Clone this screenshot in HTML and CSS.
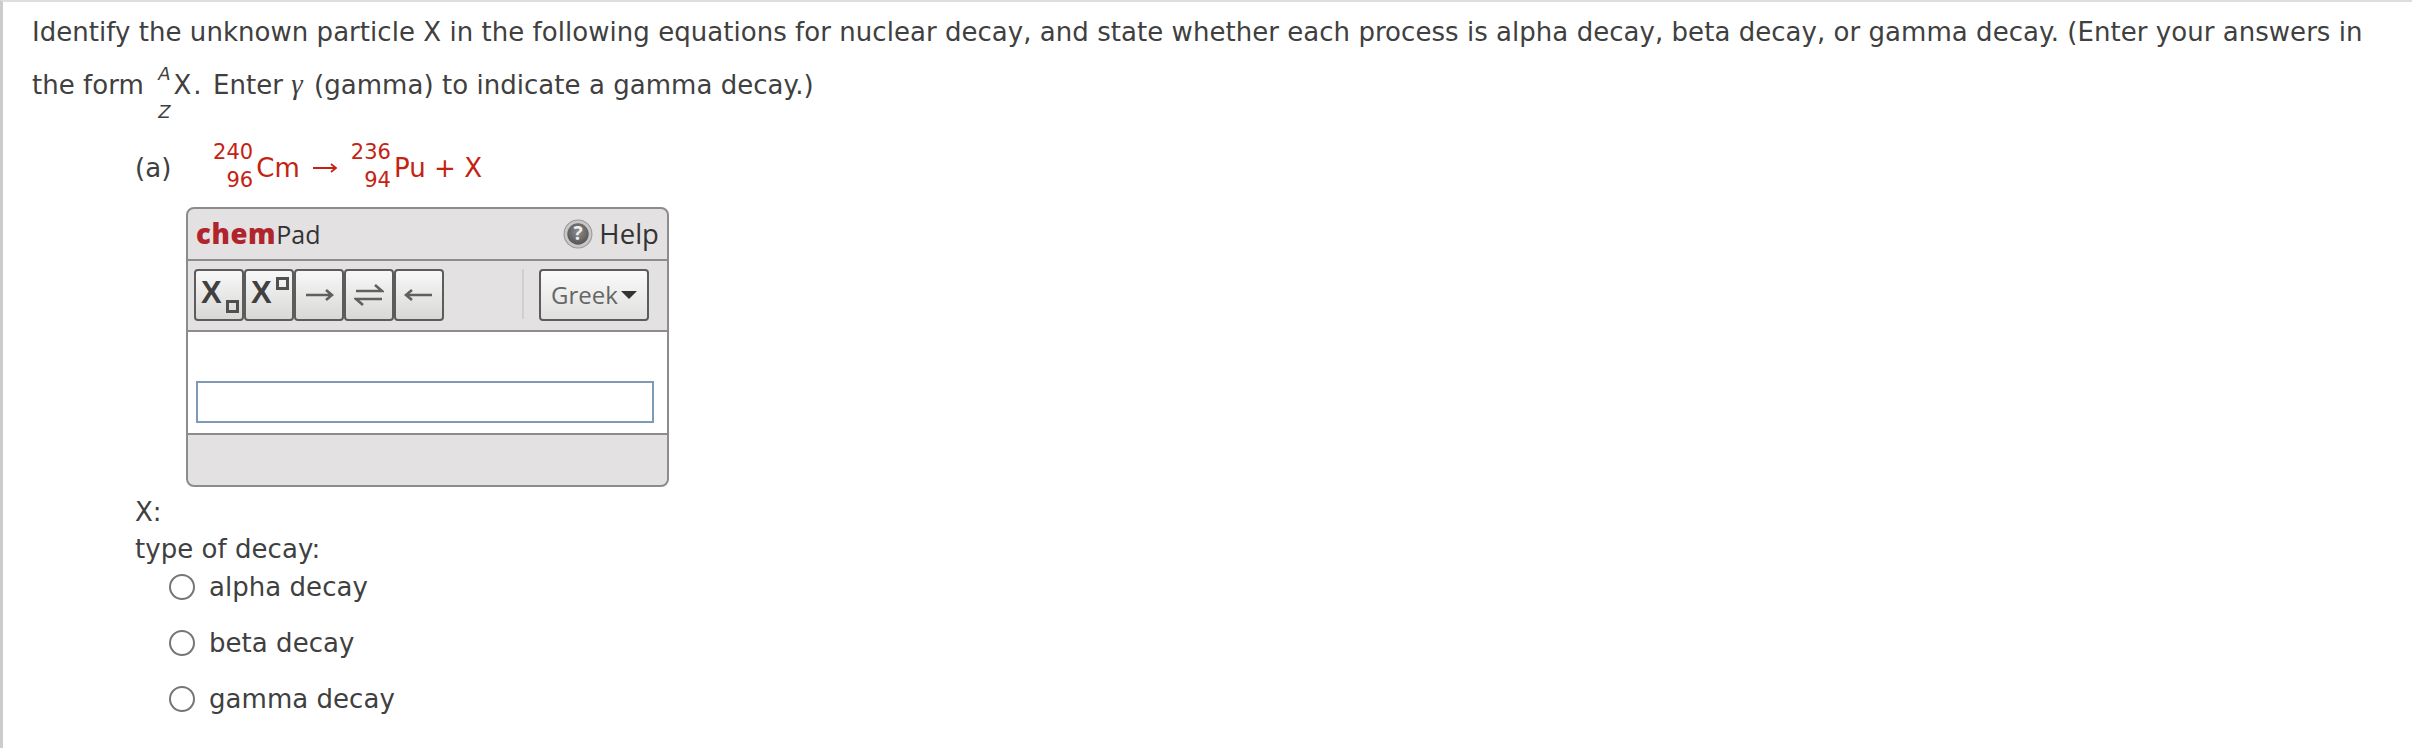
FILE: index.html
```html
<!DOCTYPE html>
<html lang="en">
<head>
    <meta charset="UTF-8">
    <title>Nuclear decay question</title>
    <link rel="stylesheet" href="styles.css">
</head>
<body>
    <div class="question">
        <p class="prompt">Identify the unknown particle X in the following equations for nuclear decay, and state whether each process is alpha decay, beta decay, or gamma decay. (Enter your answers in the form <span class="iso form"><i>A</i><i>Z</i></span><span class="form-x">X.</span> Enter <span class="gamma">&gamma;</span> (gamma) to indicate a gamma decay.)</p>

        <div class="part">
            <div class="equation">
                <span class="part-label">(a)</span>
                <div class="formula">
                    <span class="iso"><span>240</span><span>96</span></span>
                    <span>Cm</span>
                    <svg class="react-arrow" width="26" height="14" viewBox="0 0 26 14"><path d="M1 7H24M19 3l5 4-5 4" fill="none" stroke="#c42212" stroke-width="1.8"/></svg>
                    <span class="iso"><span>236</span><span>94</span></span>
                    <span class="pre">Pu + X</span>
                </div>
            </div>

            <!-- chemPad widget -->
            <div class="chempad">
                <div class="pad-header">
                    <span class="pad-title"><b>chem</b>Pad</span>
                    <span class="pad-help">
                        <svg width="30" height="30" viewBox="0 0 28 28">
                            <defs>
                                <radialGradient id="helpFill" cx="50%" cy="40%" r="60%">
                                    <stop offset="0" stop-color="#8d8d8d"/>
                                    <stop offset="1" stop-color="#555"/>
                                </radialGradient>
                            </defs>
                            <circle cx="14" cy="14" r="13" fill="#c8c8c8" stroke="#999"/>
                            <circle cx="14" cy="14" r="10" fill="url(#helpFill)"/>
                            <text x="14" y="20" text-anchor="middle" class="help-mark">?</text>
                        </svg>
                        Help
                    </span>
                </div>
                <div class="pad-toolbar">
                    <div class="tool-group">
                        <button class="tool tool-x">X<span class="box box-sub"></span></button>
                        <button class="tool tool-x">X<span class="box box-sup"></span></button>
                        <button class="tool">
                            <svg width="30" height="16" viewBox="0 0 30 16"><path d="M2 8H28M22 3l6 5-6 5" fill="none" stroke="#606060" stroke-width="2.6"/></svg>
                        </button>
                        <button class="tool">
                            <svg width="30" height="24" viewBox="0 0 30 24"><path d="M2 8H28L21 2M28 16H2L9 22" fill="none" stroke="#606060" stroke-width="2.6"/></svg>
                        </button>
                        <button class="tool">
                            <svg width="30" height="16" viewBox="0 0 30 16"><path d="M28 8H2M8 3L2 8l6 5" fill="none" stroke="#606060" stroke-width="2.6"/></svg>
                        </button>
                    </div>
                    <div class="tool-sep"></div>
                    <button class="greek">Greek<span class="caret"></span></button>
                </div>
                <div class="pad-body">
                    <input class="pad-input" type="text">
                </div>
                <div class="pad-footer"></div>
            </div>

            <div class="answer-label first">X:</div>
            <div class="answer-label">type of decay:</div>
            <div class="choices">
                <label class="choice"><input type="radio" name="a"> alpha decay</label>
                <label class="choice"><input type="radio" name="a"> beta decay</label>
                <label class="choice"><input type="radio" name="a"> gamma decay</label>
            </div>
        </div>
    </div>
</body>
</html>
```

FILE: styles.css
```css
html, body {
    margin: 0;
    padding: 0;
    height: 100%;
    overflow: hidden;
    background: #fff;
}
body {
    box-sizing: border-box;
    border-top: 2px solid #ddd;
    border-left: 3px solid #ccc;
    color: #404040;
    font-family: "DejaVu Sans", Verdana, sans-serif;
    font-size: 26px;
    letter-spacing: 0.04px;
}
.question {
    padding: 4px 30px 0 29px;
}
.prompt {
    margin: 0;
    line-height: 52px;
}
.iso {
    display: inline-flex;
    flex-direction: column;
    align-items: flex-end;
    font-size: 21px;
    line-height: 28px;
    margin: -4px 3px 0 0;
}
.iso.form {
    font-size: 18px;
    line-height: 38px;
    vertical-align: middle;
    margin: -12px 3px -12px 6px;
    position: relative;
    top: 6px;
}
.form-x {
    letter-spacing: 2px;
    margin-right: 1px;
}
.gamma {
    font-family: "Liberation Serif", serif;
    font-size: 29px;
    font-style: italic;
    margin-right: 3px;
}
.part {
    padding: 27px 0 0 103px;
}
.equation {
    display: flex;
    align-items: center;
    height: 56px;
}
.part-label {
    width: 78px;
}
.formula {
    color: #c42212;
    display: flex;
    align-items: center;
}
.pre {
    white-space: pre;
}
.react-arrow {
    margin: 0 13px 0 12px;
}
.chempad {
    box-sizing: border-box;
    width: 483px;
    height: 280px;
    margin: 11px 0 0 51px;
    border: 2px solid #8c8c8c;
    border-radius: 8px;
    background: #e4e1e2;
    display: flex;
    flex-direction: column;
}
.pad-header {
    height: 50px;
    box-sizing: content-box;
    border-bottom: 2px solid #8c8c8c;
    display: flex;
    align-items: center;
    justify-content: space-between;
    padding: 0 8px;
    font-family: "Open Sans", sans-serif;
    font-size: 27.5px;
    color: #333;
}
.pad-title {
    font-size: 25px;
}
.pad-title b {
    color: #b0242c;
    font-size: 27.5px;
    font-weight: 800;
    letter-spacing: 0.6px;
}
.pad-help {
    display: flex;
    align-items: center;
    gap: 6px;
}
.help-mark {
    fill: #eee;
    font-family: "Open Sans", sans-serif;
    font-size: 18px;
    font-weight: 700;
}
.pad-toolbar {
    box-sizing: border-box;
    height: 71px;
    border-bottom: 2px solid #8c8c8c;
    display: flex;
    align-items: flex-start;
    padding: 8px 18px 0 6px;
}
.tool-group {
    display: flex;
    flex: 1;
}
.tool {
    box-sizing: border-box;
    width: 50px;
    height: 52px;
    padding: 0;
    border: 2px solid #5c5c5c;
    border-radius: 4px;
    background: linear-gradient(#f8f8f8, #d8d8d6);
    display: flex;
    align-items: center;
    justify-content: center;
}
.tool-x {
    position: relative;
    justify-content: flex-start;
    padding: 0 0 4px 5px;
    font-family: "Liberation Sans", sans-serif;
    font-size: 31px;
    font-weight: 700;
    color: #404040;
}
.box {
    position: absolute;
    width: 7px;
    height: 7px;
    border: 3px solid #505050;
    box-sizing: content-box;
}
.box-sub {
    right: 3px;
    bottom: 6px;
}
.box-sup {
    right: 3px;
    top: 6px;
}
.tool-sep {
    width: 2px;
    height: 50px;
    background: #d0d0d0;
    margin-right: 15px;
}
.greek {
    box-sizing: border-box;
    width: 110px;
    height: 52px;
    padding: 0;
    border: 2px solid #5c5c5c;
    border-radius: 4px;
    background: linear-gradient(#fafafa, #e0e0de);
    color: #666;
    font-family: "Open Sans", sans-serif;
    font-size: 24px;
    display: flex;
    align-items: center;
    justify-content: center;
    gap: 3px;
}
.caret {
    width: 0;
    height: 0;
    border-left: 8px solid transparent;
    border-right: 8px solid transparent;
    border-top: 8px solid #333;
}
.pad-body {
    box-sizing: border-box;
    background: #fff;
    height: 103px;
    border-bottom: 2px solid #8c8c8c;
    padding: 49px 0 0 8px;
}
.pad-input {
    box-sizing: border-box;
    display: block;
    width: 458px;
    height: 42px;
    border: 2px solid #7f9ab5;
    outline: none;
    padding: 0;
}
.pad-footer {
    flex: 1;
    border-radius: 0 0 6px 6px;
}
.answer-label {
    line-height: 37px;
}
.answer-label.first {
    margin-top: 7px;
}
.choices {
    margin-top: -9px;
    padding-left: 34px;
}
.choice {
    display: flex;
    align-items: center;
    gap: 14px;
    height: 56px;
}
.choice input {
    appearance: none;
    box-sizing: border-box;
    width: 26px;
    height: 26px;
    margin: 0;
    border: 2px solid #767676;
    border-radius: 50%;
    background: #fff;
}
```
